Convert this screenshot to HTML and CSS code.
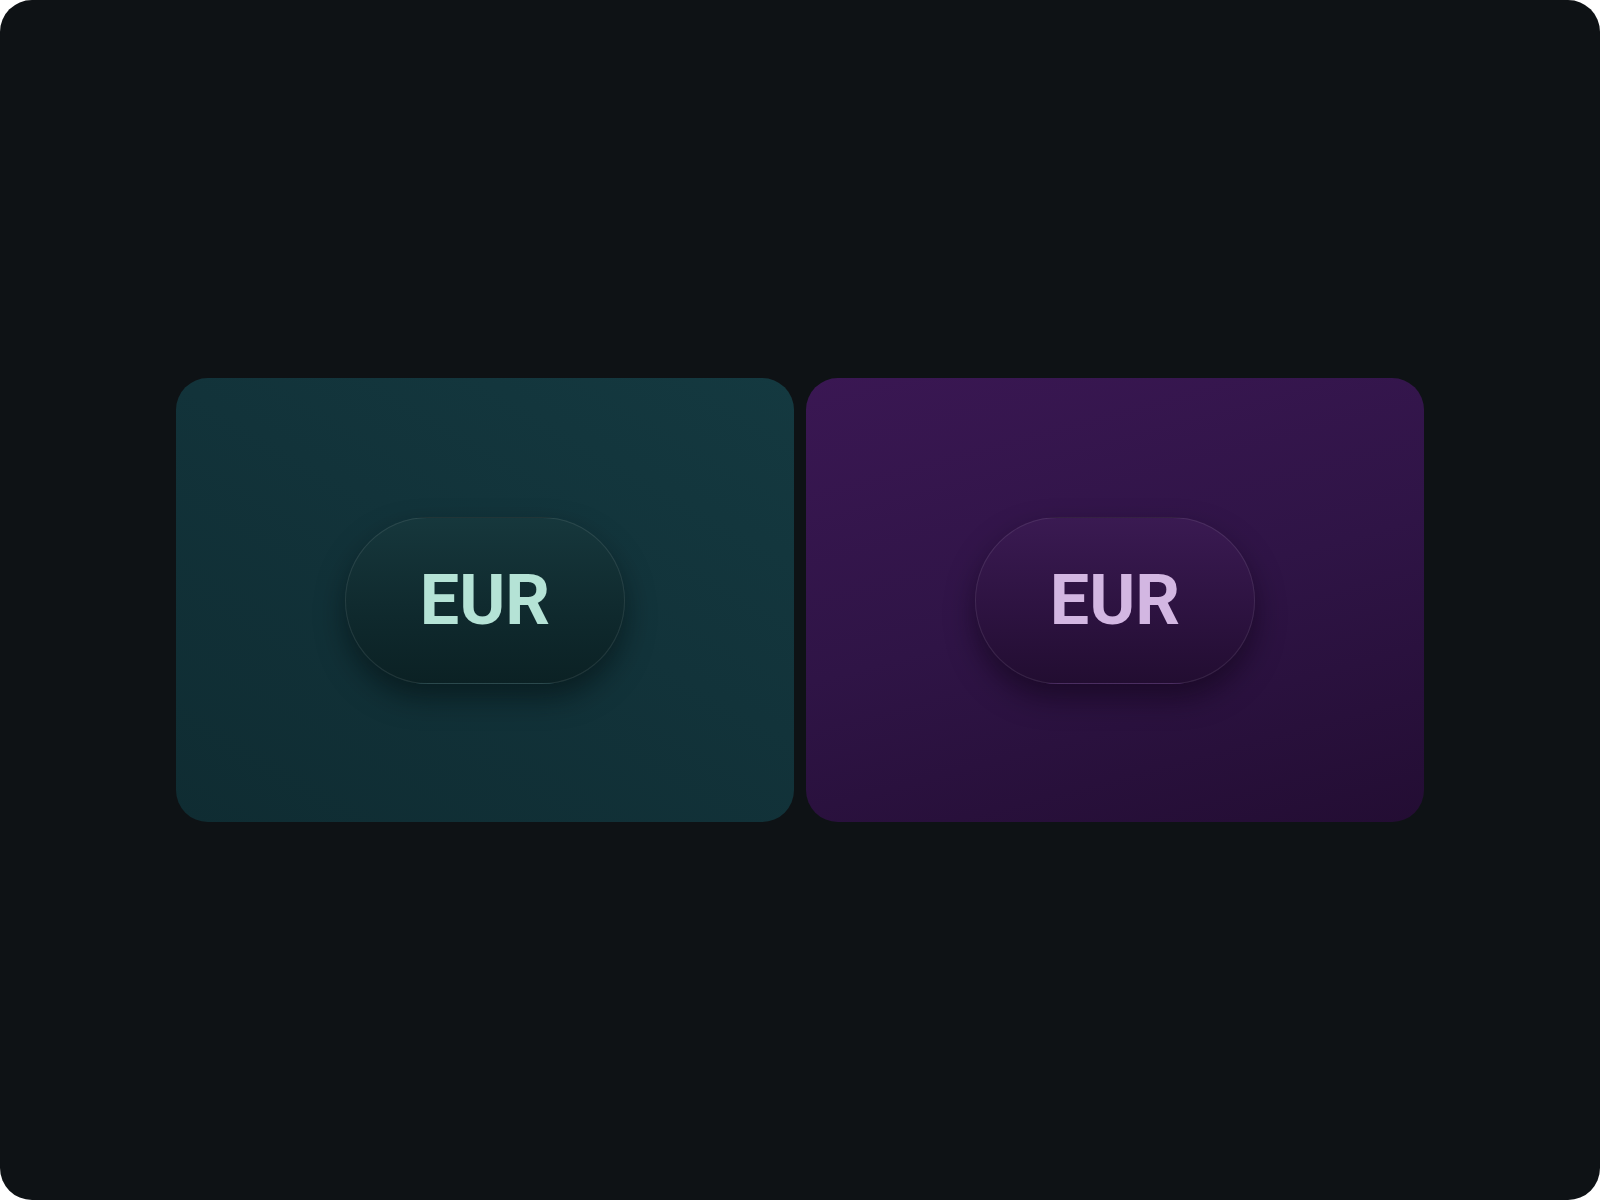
FILE: index.html
```html
<!DOCTYPE html>
<html lang="en">
<head>
<meta charset="utf-8">
<title>EUR pills</title>
<link rel="stylesheet" href="styles.css">
</head>
<body>
<div class="frame">
  <div class="row">
    <div class="panel panel-teal">
      <div class="pill pill-teal"><span class="label">EUR</span></div>
    </div>
    <div class="panel panel-purple">
      <div class="pill pill-purple"><span class="label">EUR</span></div>
    </div>
  </div>
</div>
</body>
</html>
```
FILE: styles.css
```css
html, body {
  margin: 0;
  padding: 0;
  background: #ffffff;
}
.frame {
  width: 1600px;
  height: 1200px;
  background: #0e1215;
  border-radius: 32px;
  display: flex;
  align-items: center;
  justify-content: center;
  font-family: Roboto, "Noto Sans", sans-serif;
}
.row {
  display: flex;
  gap: 12px;
}
.panel {
  width: 618px;
  height: 444px;
  border-radius: 32px;
  display: flex;
  align-items: center;
  justify-content: center;
}
.panel-teal {
  background: linear-gradient(30deg, #0f2c32 0%, #12333a 55%, #143940 100%);
}
.panel-purple {
  background: linear-gradient(165deg, #3a1753 0%, #2f1446 50%, #230d33 100%);
}
.pill {
  box-sizing: border-box;
  height: 167px;
  padding: 0 74px;
  border-radius: 84px;
  display: flex;
  align-items: center;
  justify-content: center;
  border: 1px solid rgba(255,255,255,0.09);
}
.pill-teal {
  background: linear-gradient(180deg, #16373c 0%, #0f292d 60%, #0b2124 100%);
  box-shadow: 0 14px 28px rgba(4, 14, 16, 0.55);
}
.pill-purple {
  background: linear-gradient(180deg, #3a1a52 0%, #2c123f 60%, #220d31 100%);
  box-shadow: 0 14px 28px rgba(14, 4, 22, 0.55);
}
.label {
  font-size: 70px;
  font-weight: 700;
  line-height: 1;
}
.pill-teal .label { color: #b5e3d6; }
.pill-purple .label { color: #d3b7e2; }
```
